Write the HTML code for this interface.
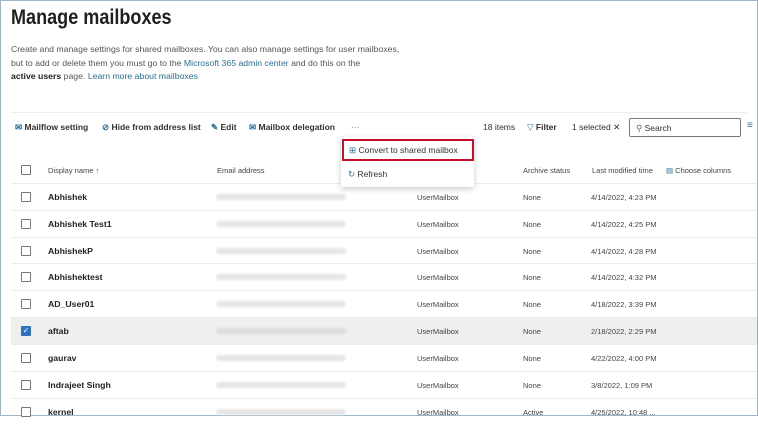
<!DOCTYPE html>
<html><head><style>
*{margin:0;padding:0;box-sizing:border-box}
body{width:758px;height:416px;overflow:hidden;background:#fff;font-family:"Liberation Sans",sans-serif;color:#323130;position:relative;border:1px solid #9fb4c4}
.a{position:absolute;white-space:nowrap}
h1{position:absolute;left:10px;top:5px;font-size:21px;font-weight:bold;color:#201f1e;transform:scaleX(0.86);transform-origin:left}
.p{font-size:8.7px;color:#555;line-height:13.5px;left:10px;top:42px}
.lk{color:#2a6f97}
.tb{font-size:8.5px;font-weight:bold;top:121px;color:#323130}
.hd{font-size:7.5px;top:165px;color:#444}
.row{position:absolute;left:10px;right:0;height:27px;border-top:1px solid #ececec}
.cb{position:absolute;left:10px;top:8px;width:10px;height:10px;border:1px solid #777;border-radius:1px;background:#fff}
.nm{position:absolute;left:37px;top:8px;font-size:8.7px;font-weight:bold;color:#222}
.bl{position:absolute;left:205px;top:10px;width:130px;height:6px;background:#e6e6e6;border-radius:3px;filter:blur(1px)}
.c{position:absolute;top:9px;font-size:7.5px;color:#444}
</style></head><body>
<h1>Manage mailboxes</h1>
<div class="a p">Create and manage settings for shared mailboxes. You can also manage settings for user mailboxes,<br>but to add or delete them you must go to the <span class="lk">Microsoft 365 admin center</span> and do this on the<br><b style="color:#222">active users</b> page. <span class="lk">Learn more about mailboxes</span></div>
<div class="a" style="left:10px;right:10px;top:111px;border-top:1px solid #eee"></div>
<div class="a tb" style="left:14px"><span style="color:#2a6f97">✉</span> Mailflow setting</div>
<div class="a tb" style="left:101px"><span style="color:#2a6f97">⊘</span> Hide from address list</div>
<div class="a tb" style="left:210px"><span style="color:#2a6f97">✎</span> Edit</div>
<div class="a tb" style="left:248px"><span style="color:#2a6f97">✉</span> Mailbox delegation</div>
<div class="a tb" style="left:350px;color:#888;font-weight:normal">···</div>
<div class="a tb" style="left:482px;font-weight:normal">18 items</div>
<div class="a tb" style="left:526px"><span style="color:#2a6f97;font-weight:normal">▽</span> Filter</div>
<div class="a tb" style="left:571px;font-weight:normal">1 selected ✕</div>
<div class="a" style="left:628px;top:117px;width:112px;height:19px;border:1px solid #777;border-radius:2px;font-size:8.5px;padding:4px 0 0 6px"><span style="color:#2a6f97">⚲</span> Search</div>
<div class="a" style="left:746px;top:119px;font-size:10px;color:#2a6f97">≡</div>
<div class="a" style="left:20px;top:164px;width:10px;height:10px;border:1px solid #777;border-radius:1px"></div>
<div class="a hd" style="left:47px">Display name ↑</div>
<div class="a hd" style="left:216px">Email address</div>
<div class="a hd" style="left:522px">Archive status</div>
<div class="a hd" style="left:591px">Last modified time</div>
<div class="a hd" style="left:665px"><span style="color:#2a6f97">▤</span> Choose columns</div>
<div class="row" style="top:182px"><div class="cb"></div><div class="nm">Abhishek</div><div class="bl"></div><div class="c" style="left:406px">UserMailbox</div><div class="c" style="left:512px">None</div><div class="c" style="left:580px">4/14/2022, 4:23 PM</div></div>
<div class="row" style="top:209px"><div class="cb"></div><div class="nm">Abhishek Test1</div><div class="bl"></div><div class="c" style="left:406px">UserMailbox</div><div class="c" style="left:512px">None</div><div class="c" style="left:580px">4/14/2022, 4:25 PM</div></div>
<div class="row" style="top:236px"><div class="cb"></div><div class="nm">AbhishekP</div><div class="bl"></div><div class="c" style="left:406px">UserMailbox</div><div class="c" style="left:512px">None</div><div class="c" style="left:580px">4/14/2022, 4:28 PM</div></div>
<div class="row" style="top:262px"><div class="cb"></div><div class="nm">Abhishektest</div><div class="bl"></div><div class="c" style="left:406px">UserMailbox</div><div class="c" style="left:512px">None</div><div class="c" style="left:580px">4/14/2022, 4:32 PM</div></div>
<div class="row" style="top:289px"><div class="cb"></div><div class="nm">AD_User01</div><div class="bl"></div><div class="c" style="left:406px">UserMailbox</div><div class="c" style="left:512px">None</div><div class="c" style="left:580px">4/18/2022, 3:39 PM</div></div>
<div class="row" style="top:316px;background:#efefef"><div class="cb" style="background:#2b72c2;border-color:#2b72c2;color:#fff;font-size:8px;line-height:8px;text-align:center">✓</div><div class="nm">aftab</div><div class="bl" style="background:#dcdcdc"></div><div class="c" style="left:406px">UserMailbox</div><div class="c" style="left:512px">None</div><div class="c" style="left:580px">2/18/2022, 2:29 PM</div></div>
<div class="row" style="top:343px"><div class="cb"></div><div class="nm">gaurav</div><div class="bl"></div><div class="c" style="left:406px">UserMailbox</div><div class="c" style="left:512px">None</div><div class="c" style="left:580px">4/22/2022, 4:00 PM</div></div>
<div class="row" style="top:370px"><div class="cb"></div><div class="nm">Indrajeet Singh</div><div class="bl"></div><div class="c" style="left:406px">UserMailbox</div><div class="c" style="left:512px">None</div><div class="c" style="left:580px">3/8/2022, 1:09 PM</div></div>
<div class="row" style="top:397px"><div class="cb"></div><div class="nm">kernel</div><div class="bl"></div><div class="c" style="left:406px">UserMailbox</div><div class="c" style="left:512px">Active</div><div class="c" style="left:580px">4/25/2022, 10:48 ...</div></div>
<div class="a" style="left:340px;top:136px;width:133px;height:50px;background:#fff;box-shadow:0 2px 6px rgba(0,0,0,.2)"></div>
<div class="a" style="left:341px;top:138px;width:132px;height:22px;border:2px solid #c8102e;font-size:8.5px;padding:4px 0 0 5px;background:#fff"><span style="color:#2a6f97">⊞</span> Convert to shared mailbox</div>
<div class="a" style="left:347px;top:168px;font-size:8.5px"><span style="color:#2a6f97">↻</span> Refresh</div>
</body></html>
